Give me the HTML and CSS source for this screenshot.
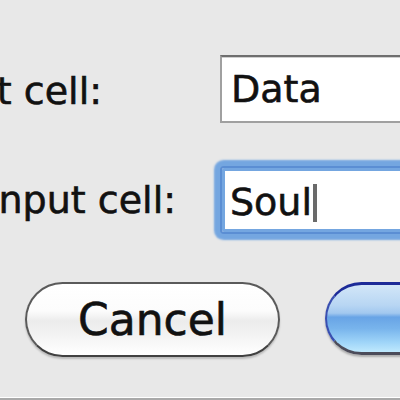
FILE: index.html
```html
<!DOCTYPE html>
<html>
<head>
<meta charset="utf-8">
<link rel="stylesheet" href="styles.css">
</head>
<body>
<div class="dialog">
  <div class="row row-output">
    <div class="label label-output"><span>Output cell:</span></div>
    <div class="field-wrap"><div class="field">Data</div></div>
  </div>
  <div class="row row-input">
    <div class="label label-input"><span>Input cell:</span></div>
    <div class="field-wrap"><div class="field focused">Soul<span class="caret"></span></div></div>
  </div>
  <div class="buttons">
    <button class="btn cancel">Cancel</button>
    <button class="btn default"></button>
  </div>
  <div class="footer-line"></div>
</div>
</body>
</html>
```
FILE: styles.css
```css
html, body {
  margin: 0;
  padding: 0;
  width: 400px;
  height: 400px;
  overflow: hidden;
  background: #e8e8e8;
}
.dialog {
  display: flex;
  flex-direction: column;
  width: 400px;
  height: 400px;
  font-family: "DejaVu Sans", "Liberation Sans", sans-serif;
  color: #111;
  -webkit-text-stroke: 0.6px #111;
}
.row {
  display: flex;
  align-items: center;
  height: 68px;
}
.row-output { margin-top: 55px; }
.row-input { margin-top: 43px; }
.label {
  display: flex;
  justify-content: flex-end;
  font-size: 38px;
  white-space: nowrap;
  flex: none;
}
.label-output { width: 102px; margin-right: 118px; padding-top: 4px; }
.label-input { width: 176px; margin-right: 44px; padding-top: 0; }
.field-wrap {
  flex: none;
  width: 300px;
  height: 68px;
}
.field {
  box-sizing: border-box;
  height: 68px;
  width: 300px;
  background: #fff;
  border: 2px solid #a0a0a0;
  border-top-color: #6e6e6e;
  box-shadow: inset 0 1px 0 #cfcfcf;
  font-size: 38px;
  line-height: 64px;
  padding-left: 9px;
  white-space: nowrap;
}
.field.focused {
  border-color: #5b8ed3;
  box-shadow: inset 0 0 0 3px #74a6e0, 0 0 2px 6px #74a6e0;
  border-radius: 4px;
  padding-left: 8px;
  line-height: 68px;
}
.caret {
  display: inline-block;
  width: 4px;
  height: 38px;
  background: #6a6a6a;
  vertical-align: -7px;
  margin-left: 1px;
}
.buttons {
  display: flex;
  gap: 45px;
  margin-top: 48px;
  margin-left: 25px;
  height: 75px;
}
.btn {
  flex: none;
  box-sizing: border-box;
  height: 75px;
  border-radius: 38px;
  font-family: "DejaVu Sans", "Liberation Sans", sans-serif;
  font-size: 44px;
  color: #111;
  padding: 0;
  margin: 0;
  -webkit-text-stroke: 0.6px #111;
}
.cancel {
  width: 255px;
  border: 2px solid #5a5a5a;
  border-bottom-color: #404040;
  background: linear-gradient(#ffffff 0%, #fcfcfc 38%, #ececec 52%, #f3f3f3 72%, #ffffff 100%);
  box-shadow: 0 2px 2px rgba(0,0,0,0.2);
  line-height: 68px;
}
.default {
  width: 200px;
  height: 73px;
  border: 2px solid #3a4fb0;
  border-top: 3px solid #1c2a98;
  border-bottom: 3px solid #4c4c5a;
  background: linear-gradient(#d2e6f8 0%, #b8d6f3 30%, #a2c8ef 42%, #68a4e6 48%, #78b4ec 65%, #9ed4f8 85%, #bfe9fd 100%);
  box-shadow: 0 2px 2px rgba(0,0,0,0.25);
}
.footer-line {
  margin-top: auto;
  height: 2px;
  border-top: 1px solid #ffffff;
  background: #a9a9a9;
}
```
